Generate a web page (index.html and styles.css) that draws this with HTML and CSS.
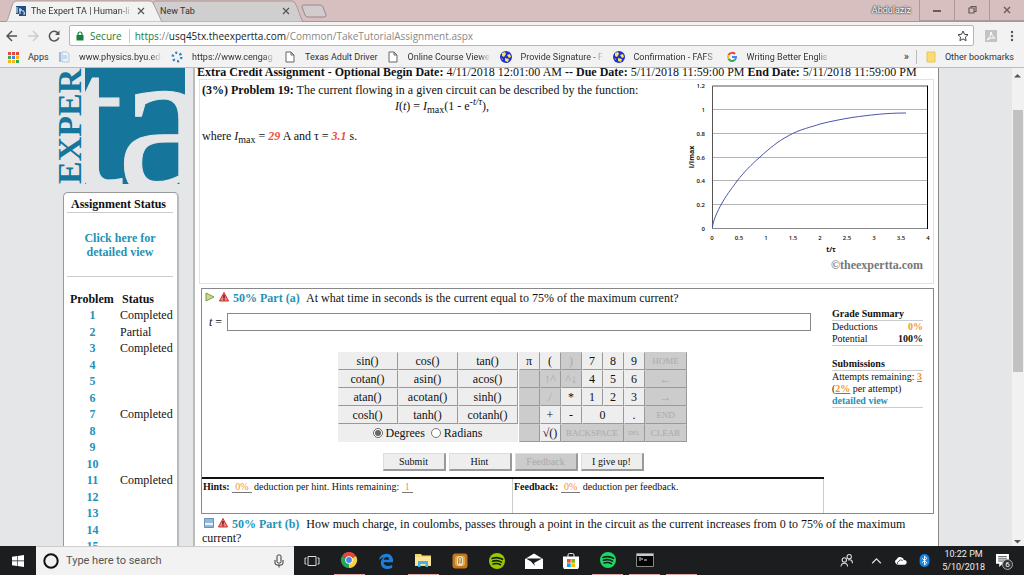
FILE: index.html
```html
<!DOCTYPE html>
<html lang="en">
<head>
<meta charset="utf-8">
<title>The Expert TA | Human-like Grading</title>
<link rel="stylesheet" href="styles.css">
</head>
<body>
<header class="browser">
  <div class="tabstrip">
    <div class="tab tab-active">
      <svg class="tab-shape" viewBox="0 0 158 22" preserveAspectRatio="none"><path d="M0 22C4 22 4 18 8 6Q9 1 13 1H146Q149 1 150 5L158 22Z" fill="#f2f2f2" stroke="#a08c8c" stroke-width=".8"/></svg>
      <svg class="ico" viewBox="0 0 12 12"><path d="M1 1h10v10H4V9H1z" fill="#1f4f86"/><path d="M5 3v6M4 5h3M7 6q3-1 2 4M1 3h2M1 5h2M1 7h2" stroke="#fff" fill="none"/></svg>
      <span class="tab-title fade">The Expert TA | Human-li</span>
      <button class="close" aria-label="Close tab"><svg viewBox="0 0 8 8"><path d="M1 1l6 6M7 1L1 7" stroke="#555" stroke-width="1.2"/></svg></button>
    </div>
    <div class="tab tab-idle">
      <svg class="tab-shape" viewBox="0 0 152 22" preserveAspectRatio="none"><path d="M8 22L2 7Q0 1 4 1H140Q143 1 145 7L149 18Q150 22 152 22Z" fill="#d0cecf" stroke="#a08c8c" stroke-width=".8"/></svg>
      <span class="tab-title">New Tab</span>
      <button class="close" aria-label="Close tab"><svg viewBox="0 0 8 8"><path d="M1 1l6 6M7 1L1 7" stroke="#555" stroke-width="1.2"/></svg></button>
    </div>
    <button class="newtab" aria-label="New tab"><svg viewBox="0 0 26 14"><path d="M2 1H19Q21 1 22 3L25 11Q25 13 23 13H7Q5 13 4 11L1 3Q1 1 2 1Z" fill="#d1cdce" stroke="#9a8888"/></svg></button>
    <div class="window-tools">
      <span class="user">Abdulaziz</span>
      <button aria-label="Minimize"><svg viewBox="0 0 10 10"><path d="M1 6h8" stroke="#665c5c" stroke-width="2"/></svg></button>
      <button aria-label="Restore"><svg viewBox="0 0 10 10"><path d="M2 3h5v5H2zM4 3V1.500h5v5H7" fill="none" stroke="#665c5c" stroke-width="1.200"/></svg></button>
      <button aria-label="Close"><svg viewBox="0 0 10 10"><path d="M2 2l6 6M8 2L2 8" stroke="#665c5c" stroke-width="1.400"/></svg></button>
    </div>
  </div>
  <div class="toolbar">
    <button aria-label="Back"><svg viewBox="0 0 12 12"><path d="M11 6H1M6 1L1 6l5 5" fill="none" stroke="#555" stroke-width="1.500"/></svg></button>
    <button aria-label="Forward"><svg viewBox="0 0 12 12"><path d="M1 6h10M6 1l5 5-5 5" fill="none" stroke="#ccc" stroke-width="1.500"/></svg></button>
    <button aria-label="Reload"><svg viewBox="0 0 12 12"><path d="M10 3.200A4.800 4.800 0 1 0 10.800 7.500" fill="none" stroke="#555" stroke-width="1.500"/><path d="M11.500 .5v4.500H7z" fill="#555"/></svg></button>
    <div class="omnibox">
      <svg class="lock" viewBox="0 0 8 10"><path d="M2 5V3a2 2 0 0 1 4 0v2" fill="none" stroke="#0b8043" stroke-width="1.200"/><path d="M.5 4h7v5.500h-7z" fill="#188038"/></svg>
      <span class="secure">Secure</span>
      <div class="url" role="textbox" aria-label="Address"><span class="green">https</span>://<span class="host">usq45tx.theexpertta.com</span>/Common/TakeTutorialAssignment.aspx</div>
      <button aria-label="Bookmark page"><svg viewBox="0 0 12 12"><path d="M6 1l1.500 3.300 3.500.4-2.600 2.400.7 3.600L6 8.900l-3.100 1.800.7-3.600L1 4.700l3.500-.4z" fill="none" stroke="#444"/></svg></button>
    </div>
    <button class="ext" aria-label="Acrobat extension"><svg viewBox="0 0 12 12"><path d="M0 0h12v12H0z" fill="#c3c3c3"/><path d="M2 10q4-3 4-8 1 5 4 6-4-1-8 2" fill="none" stroke="#fff"/></svg></button>
    <button class="menu" aria-label="Menu"><svg viewBox="0 0 12 12"><circle cx="6" cy="2" r="1.200" fill="#555"/><circle cx="6" cy="6" r="1.200" fill="#555"/><circle cx="6" cy="10" r="1.200" fill="#555"/></svg></button>
  </div>
  <nav class="bookmarks">
    <a class="apps" href="#"><svg viewBox="0 0 11 11"><path d="M0 0h3v3H0zM4 0h3v3H4zM8 0h3v3H8z" fill="#e5473b"/><path d="M0 4h3v3H0zM8 8h3v3H8z" fill="#38a852"/><path d="M4 4h3v3H4z" fill="#4382ee"/><path d="M8 4h3v3H8zM0 8h3v3H0zM4 8h3v3H4z" fill="#f5b916"/></svg>Apps</a>
    <a class="mark" href="#"><svg viewBox="0 0 12 12"><path d="M1 1h2v10H1z" fill="#9cc0dd"/><path d="M4 1h5l2 2v8H4z" fill="#eef3f8" stroke="#b9c7d6"/><path d="M5 5h4M5 7h4" stroke="#9cc0dd"/></svg><span class="fade">www.physics.byu.edu</span></a>
    <a class="mark" href="#"><svg viewBox="0 0 12 12"><circle cx="6" cy="6" r="4.300" fill="none" stroke="#2c86b8" stroke-width="2.500" stroke-dasharray="2 2.500"/></svg><span class="fade">https://www.cengag</span></a>
    <a class="mark" href="#"><svg viewBox="0 0 12 12"><path d="M2 1h5l3 3v7H2zM7 1v3h3" fill="#fff" stroke="#666"/></svg><span>Texas Adult Driver</span></a>
    <a class="mark" href="#"><svg viewBox="0 0 12 12"><path d="M2 1h5l3 3v7H2zM7 1v3h3" fill="#fff" stroke="#666"/></svg><span class="fade">Online Course Viewe</span></a>
    <a class="mark" href="#"><svg viewBox="0 0 12 12"><circle cx="6" cy="6" r="6" fill="#1a2fd8"/><path d="M2 2l3-1 1 2-2 3-2-1zM7 4l3-1 1 3-2 1zM5 7l4 1-1 3-3-1zM1 7l2 1v1z" fill="#ffe34d"/></svg><span class="fade">Provide Signature - F</span></a>
    <a class="mark" href="#"><svg viewBox="0 0 12 12"><circle cx="6" cy="6" r="6" fill="#1a2fd8"/><path d="M2 2l3-1 1 2-2 3-2-1zM7 4l3-1 1 3-2 1zM5 7l4 1-1 3-3-1zM1 7l2 1v1z" fill="#ffe34d"/></svg><span class="fade">Confirmation - FAFS</span></a>
    <a class="mark" href="#"><svg viewBox="0 0 12 12"><g fill="none" stroke-width="2"><path d="M9 3A4 4 0 0 0 2.500 4.200" stroke="#ea4335"/><path d="M2.500 4.200a4 4 0 0 0 0 3.600" stroke="#fbbc05"/><path d="M2.500 7.800A4 4 0 0 0 8.700 9" stroke="#34a853"/><path d="M8.700 9A4 4 0 0 0 10 6H6" stroke="#4285f4"/></g></svg><span class="fade">Writing Better Englis</span></a>
    <span class="more">»</span>
    <a class="other" href="#"><svg viewBox="0 0 10 12"><path d="M1 1h8v10H1z" fill="#fbdc74" stroke="#e8c658"/></svg>Other bookmarks</a>
  </nav>
</header>

<div class="viewport">
  <aside class="sidebar">
    <svg class="logo" viewBox="0 0 128 122" role="img" aria-label="Expert TA">
      <defs><clipPath id="tile"><path d="M28 0h100v119H28z"/></clipPath></defs>
      <path d="M28 0h100v119H28z" fill="#15759a"/>
      <g clip-path="url(#tile)"><text class="logo-t" x="12" y="123">t</text><text class="logo-a" x="60" y="126">a</text></g>
      <text class="logo-expert" transform="translate(24 119) rotate(-90)">EXPER</text>
    </svg>
    <section class="status">
      <h2>Assignment Status</h2>
      <a class="detail" href="#">Click here for detailed view</a>
      <table>
        <thead><tr><th>Problem</th><th>Status</th></tr></thead>
        <tbody>
          <tr><td>1</td><td>Completed</td></tr><tr><td>2</td><td>Partial</td></tr><tr><td>3</td><td>Completed</td></tr>
          <tr><td>4</td><td></td></tr><tr><td>5</td><td></td></tr><tr><td>6</td><td></td></tr>
          <tr><td>7</td><td>Completed</td></tr><tr><td>8</td><td></td></tr><tr><td>9</td><td></td></tr>
          <tr><td>10</td><td></td></tr><tr><td>11</td><td>Completed</td></tr><tr><td>12</td><td></td></tr>
          <tr><td>13</td><td></td></tr><tr><td>14</td><td></td></tr><tr><td>15</td><td></td></tr>
        </tbody>
      </table>
    </section>
  </aside>

  <main class="main">
    <p class="dates"><b>Extra Credit Assignment - Optional Begin Date:</b> 4/11/2018 12:01:00 AM <b>-- Due Date:</b> 5/11/2018 11:59:00 PM <b>End Date:</b> 5/11/2018 11:59:00 PM</p>
    <section class="problem">
      <div class="statement">
        <p><b>(3%) Problem 19:</b> The current flowing in a given circuit can be described by the function:</p>
        <p class="formula"><i>I</i>(<i>t</i>) = <i>I</i><sub>max</sub>(1 - e<sup>-<i>t/τ</i></sup>),</p>
        <p class="given">where <i>I</i><sub>max</sub> = <em>29</em> A and τ = <em>3.1</em> s.</p>
      </div>
      <div class="figure">
        <svg viewBox="0 0 250 176" role="img" aria-label="I over Imax against t over tau">
          <path d="M30 27.500H245M30 51.500H245M30 75.500H245M30 98.500H245M30 122.500H245" stroke="#b3b3b3" stroke-width="1.200"/>
          <path d="M30.500 4H245M30.500 4V146.500" fill="none" stroke="#555"/><path d="M30 146.500H245.500" stroke="#888"/><path d="M245.500 3.500V147" stroke="#000"/>
          <path d="M30.500 145C31 139 35 130 40 121C47 109 51 105 55 99C63 89 69 83 78 75C88 66 95 60 106 54C118 47 130 45 138 42C150 39 161 37 170 35.500C188 33 204 31 224 31" fill="none" stroke="#4a56a8"/>
          <g text-anchor="end"><text x="23" y="6">1.2</text><text x="23" y="30">1</text><text x="23" y="54">0.8</text><text x="23" y="78">0.6</text><text x="23" y="101">0.4</text><text x="23" y="125">0.2</text><text x="23" y="149">0</text></g>
          <g text-anchor="middle"><text x="30" y="158">0</text><text x="57" y="158">0.5</text><text x="84" y="158">1</text><text x="111" y="158">1.5</text><text x="138" y="158">2</text><text x="165" y="158">2.5</text><text x="192" y="158">3</text><text x="219" y="158">3.5</text><text x="246" y="158">4</text><text class="axis" x="149" y="170">t/τ</text><text class="axis" transform="translate(12 75) rotate(-90)">I/Imax</text></g>
        </svg>
        <p class="credit">©theexpertta.com</p>
      </div>
    </section>

    <section class="part">
      <p class="question"><svg class="mini" viewBox="0 0 10 10"><path d="M1 1l8 4-8 4z" fill="#c3df7d" stroke="#7f9a4d"/></svg><svg class="warn" viewBox="0 0 10 10"><path d="M5 .5L9.600 9H.4z" fill="#f08080" stroke="#c33"/><path d="M5 3v3.500M5 7.300v1" stroke="#400" stroke-width="1.200"/></svg><b class="teal">50% Part (a)</b> At what time in seconds is the current equal to 75% of the maximum current?</p>
      <div class="work">
        <div class="entry">
          <div class="answer"><label for="ans"><i>t</i> =</label><input id="ans" type="text"></div>
          <div class="keys">
            <div class="funcs">
              <button>sin()</button><button>cos()</button><button>tan()</button>
              <button>cotan()</button><button>asin()</button><button>acos()</button>
              <button>atan()</button><button>acotan()</button><button>sinh()</button>
              <button>cosh()</button><button>tanh()</button><button>cotanh()</button>
              <div class="units"><label><input type="radio" name="u" checked>Degrees</label><label><input type="radio" name="u">Radians</label></div>
            </div>
            <div class="pad">
              <button>π</button><button>(</button><button disabled>)</button><button>7</button><button>8</button><button>9</button><button class="small" disabled>HOME</button>
              <button disabled aria-label="blank"></button><button disabled>↑^</button><button disabled>^↓</button><button>4</button><button>5</button><button>6</button><button disabled>←</button>
              <button disabled aria-label="blank"></button><button disabled>/</button><button>*</button><button>1</button><button>2</button><button>3</button><button disabled>→</button>
              <button disabled aria-label="blank"></button><button>+</button><button>-</button><button class="two">0</button><button>.</button><button class="small" disabled>END</button>
              <button disabled aria-label="blank"></button><button>√()</button><button class="three small" disabled>BACKSPACE</button><button class="tiny" disabled>DEL</button><button class="small" disabled>CLEAR</button>
            </div>
          </div>
          <div class="actions"><button>Submit</button><button>Hint</button><button disabled>Feedback</button><button>I give up!</button></div>
          <div class="notes">
            <p><b>Hints:</b> <span class="blank">0%</span> deduction per hint. Hints remaining: <span class="blank">1</span></p>
            <p><b>Feedback:</b> <span class="blank">0%</span> deduction per feedback.</p>
          </div>
        </div>
        <aside class="grades">
          <h3>Grade Summary</h3>
          <dl><dt>Deductions</dt><dd class="orange">0%</dd><dt>Potential</dt><dd>100%</dd></dl>
          <h3>Submissions</h3>
          <div class="tries">Attempts remaining: <span class="left">3</span><br>(<span class="left">2%</span> per attempt)<br><a href="#">detailed view</a></div>
        </aside>
      </div>
    </section>
    <p class="question next"><svg class="mini" viewBox="0 0 10 10"><path d="M.5.5h9v9h-9z" fill="#8fbbe3" stroke="#6e8fb5"/><path d="M1 6h8" stroke="#e8f2fb" stroke-width="2"/></svg><svg class="warn" viewBox="0 0 10 10"><path d="M5 .5L9.600 9H.4z" fill="#f08080" stroke="#c33"/><path d="M5 3v3.500M5 7.300v1" stroke="#400" stroke-width="1.200"/></svg><b class="teal">50% Part (b)</b> How much charge, in coulombs, passes through a point in the circuit as the current increases from 0 to 75% of the maximum current?</p>
  </main>
  <div class="scroll"><svg viewBox="0 0 11 8"><path d="M2 5.500h7L5.500 2z" fill="#555"/></svg><div class="thumb"></div><svg viewBox="0 0 11 8"><path d="M2 2h7L5.500 5.500z" fill="#555"/></svg></div>
</div>

<footer class="taskbar">
  <button class="start" aria-label="Start"><svg viewBox="0 0 12 12"><path d="M0 1.800l5-.8v4.600H0zM5.600.9L12 0v5.600H5.600zM0 6.300h5V11l-5-.8zM5.600 6.300H12V12l-6.400-.9z" fill="#fff"/></svg></button>
  <div class="search">
    <svg class="ring" viewBox="0 0 16 16"><circle cx="8" cy="8" r="6.700" fill="none" stroke="#111" stroke-width="2"/></svg>
    <input type="text" placeholder="Type here to search" aria-label="Search">
    <svg class="mic" viewBox="0 0 10 14"><rect x="3" y="1" width="4" height="8" rx="1.500" fill="none" stroke="#333"/><path d="M1 6v3q0 2 2 2h4q2 0 2-2V6M5 11v2.500" fill="none" stroke="#333"/></svg>
  </div>
  <div class="apps-row">
    <button aria-label="Task view"><svg viewBox="0 0 16 16"><path d="M4 3.500h8v9H4zM2.500 5H1v6h1.500M13.500 5H15v6h-1.500" fill="none" stroke="#ddd"/></svg></button>
    <button class="open" aria-label="Chrome"><svg viewBox="0 0 16 16"><path d="M8 8L1 4A8 8 0 0 1 15 4z" fill="#de4b3b"/><path d="M8 8L15 4A8 8 0 0 1 8 16z" fill="#fbd03b"/><path d="M8 8L8 16A8 8 0 0 1 1 4z" fill="#27a557"/><circle cx="8" cy="8" r="3.800" fill="#fff"/><circle cx="8" cy="8" r="2.900" fill="#4587f0"/></svg></button>
    <button aria-label="Edge"><svg viewBox="0 0 16 16"><path d="M1 7Q2 1 8.500 .8Q15.500 1 15 9.200H5.600Q6 13 10 13q2.500 0 4.200-1.200v3Q12 16 9 16Q2.700 15.500 2.800 9.500Q3 6 6.500 4.500Q3 4.700 1 7zM5.800 6.700h5.400Q11 4 8.600 4T5.800 6.700z" fill="#1b7fdb"/></svg></button>
    <button class="open" aria-label="File Explorer"><svg viewBox="0 0 16 16"><path d="M0 2h6l1 1.500h9V14H0z" fill="#f7d774"/><path d="M0 5h16v8H0z" fill="#fde698"/><path d="M3 15V9h10v6h-2.500v-3h-5v3z" fill="#44b4e4"/></svg></button>
    <button aria-label="Stamp"><svg viewBox="0 0 16 16"><rect x=".5" y=".5" width="15" height="15" rx="3" fill="#c5781b"/><rect x="3" y="3" width="10" height="10" rx="2" fill="#dfa652"/><rect x="5" y="3" width="6" height="10" rx="3" fill="#f3e2b8"/><path d="M6.500 11V6q0-1.500 1.500-1.500T9.500 6v4H8V6.500" fill="none" stroke="#9d7630" stroke-width=".8"/></svg></button>
    <button aria-label="Music"><svg viewBox="0 0 16 16"><circle cx="8" cy="8" r="8" fill="#9bc800"/><path d="M3 5.500q5.500-2 10.500.8M3.500 8.300q4.500-1.600 9 .8M4 11q4-1.300 7.500.7" fill="none" stroke="#16210b" stroke-width="1.600" stroke-linecap="round"/></svg></button>
    <button aria-label="Mail"><svg viewBox="0 0 18 16"><path d="M0 6l9-5.500L18 6v10H0z" fill="#fff"/><path d="M1 5.500h16L9 10l1 3-4-4.500z" fill="#1b1d1e"/></svg></button>
    <button aria-label="Store"><svg viewBox="0 0 16 16"><path d="M5 4V2q0-1.500 1.500-1.500h3Q11 .5 11 2v2" fill="none" stroke="#eee"/><path d="M0 3.500h16V14l-1 2H1l-1-2z" fill="#fff"/><path d="M4 6h3.700v3.700H4z" fill="#f25022"/><path d="M8.300 6H12v3.700H8.300z" fill="#7fba00"/><path d="M4 10.300h3.700V14H4z" fill="#00a4ef"/><path d="M8.300 10.300H12V14H8.300z" fill="#ffb900"/></svg></button>
    <button class="open" aria-label="Spotify"><svg viewBox="0 0 16 16"><circle cx="8" cy="8" r="8" fill="#1fd565"/><path d="M3 5.500q5.500-2 10.500.8M3.500 8.300q4.500-1.600 9 .8M4 11q4-1.300 7.500.7" fill="none" stroke="#12251a" stroke-width="1.600" stroke-linecap="round"/></svg></button>
    <button class="open" aria-label="Command Prompt"><svg viewBox="0 0 18 16"><path d="M.5 1.500h17v13H.5z" fill="#050505" stroke="#888"/><path d="M1 2h16v2H1z" fill="#ccc"/><path d="M3 6h2M3 8h2M6 6v2M8 8h3" stroke="#ddd"/></svg></button>
    <button class="open" aria-label="Window"></button>
  </div>
  <div class="tray">
    <svg viewBox="0 0 12 12"><g fill="none" stroke="#ddd"><circle cx="4" cy="5.500" r="2"/><path d="M1 11.500q0-3 3-3t3 3"/><circle cx="8.500" cy="2.500" r="2"/><path d="M7.500 5.500q4-1 4 3"/></g></svg>
    <svg class="chevron" viewBox="0 0 12 12"><path d="M2 8.500l4-4 4 4" fill="none" stroke="#ddd" stroke-width="1.200"/></svg>
    <svg viewBox="0 0 12 12"><path d="M2 9a2.300 2.300 0 0 1 .3-4Q3.500 1.800 6.500 3 9 3.500 9 5.500q2.700 0 2.700 2T10 10H3z" fill="#fff"/><path d="M3.500 9.500q-1-2 1-3Q6 4.500 8 6" fill="none" stroke="#1b1d1e" stroke-width=".7"/></svg>
    <svg viewBox="0 0 12 12"><rect x="1.500" width="9" height="12" rx="4.500" fill="#1486e8"/><path d="M3.800 4l4.400 4L6 10V2l2.200 2-4.400 4" fill="none" stroke="#fff" stroke-width=".9"/></svg>
    <div class="clock"><span>10:22 PM</span><span>5/10/2018</span></div>
    <button class="notice" aria-label="6 notifications"><svg viewBox="0 0 12 12"><path d="M0 0h12v9H6l-3 3V9H0z" fill="#fff"/><path d="M2 2.500h8M2 4.500h8M2 6.500h8" stroke="#333" stroke-width=".8"/></svg><span class="count">6</span></button>
  </div>
</footer>
</body>
</html>
```

FILE: styles.css
```css
* { box-sizing: border-box; }
body { margin: 0; height: 100vh; overflow: hidden; display: flex; flex-direction: column; font: 12px/14px "Liberation Serif", serif; color: #111; }
p, h2, h3, dl, dd { margin: 0; }
button { border: 0; padding: 0; background: none; font: inherit; color: inherit; }
a { color: inherit; text-decoration: none; }
svg { display: block; flex: none; }

.browser { flex: none; font: 9px/14px Roboto, sans-serif; color: #333; background: #f2f2f2; }
.tabstrip { display: flex; height: 22px; padding-left: 4px; background: #d6bfbe; border-bottom: 1px solid #a99797; }
.tab { position: relative; display: flex; align-items: center; height: 22px; }
.tab-active { width: 158px; padding: 0 17px 0 11px; gap: 4px; z-index: 1; }
.tab-idle { width: 152px; margin-left: -10px; padding: 0 14px 0 8px; }
.tab-shape { inset: 0; width: 100%; height: 22px; }
.tab > * { position: relative; }
.tab > .tab-shape { position: absolute; }
.ico { width: 12px; height: 12px; }
.tab-title { flex: 1; white-space: nowrap; overflow: hidden; }
.fade { -webkit-mask-image: linear-gradient(to right, #000 86%, transparent); mask-image: linear-gradient(to right, #000 86%, transparent); }
.close svg { width: 8px; height: 8px; }
.newtab { margin-left: -3px; }
.newtab svg { width: 26px; height: 14px; }
.window-tools { margin-left: auto; display: flex; }
.window-tools button { width: 35px; height: 21px; display: grid; place-items: center; border-left: 1px solid #ac9999; border-bottom: 1px solid #ac9999; }
.window-tools svg { width: 10px; height: 10px; }
.user { padding: 3px 8px 0 0; color: #fff; text-shadow: 0 0 2px #222, 0 0 2px #222; }
.toolbar { display: flex; align-items: center; height: 25px; padding: 2px 6px 0; gap: 9px; }
.toolbar svg { width: 12px; height: 12px; }
.omnibox { flex: 1; display: flex; align-items: center; height: 21px; margin-right: 2px; padding: 0 4px 0 6px; background: #fff; border: 1px solid #b5b5b5; border-radius: 2px; font: 10px/14px "Open Sans", sans-serif; color: #888; }
.omnibox .lock { width: 8px; height: 10px; }
.secure { margin-left: 6px; padding-right: 7px; border-right: 1px solid #ccc; color: #188038; }
.url { flex: 1; margin-left: 5px; white-space: nowrap; }
.green { color: #188038; }
.host { color: #222; }
.bookmarks { display: flex; align-items: center; height: 21px; padding: 0 10px 0 8px; border-bottom: 1px solid #bbb; white-space: nowrap; }
.bookmarks a { display: flex; align-items: center; }
.bookmarks svg { width: 12px; height: 12px; }
.bookmarks .apps { width: 50px; gap: 9px; }
.bookmarks .apps svg { width: 11px; height: 11px; }
.mark { gap: 9px; margin-right: 9px; }
.mark .fade { width: 83px; overflow: hidden; }
.more { margin-left: auto; padding-right: 7px; font-size: 11px; }
.other { gap: 8px; padding-left: 8px; border-left: 1px solid #bbb; }

.viewport { flex: 1; min-height: 0; display: flex; overflow: hidden; background: #e5e6e8; }
.sidebar { flex: none; width: 193px; padding-left: 57px; margin-top: -3px; }
.logo { width: 128px; height: 122px; }
.logo-t, .logo-a { font: 195px "Liberation Serif", serif; fill: #e5e6e8; stroke: #e5e6e8; stroke-width: 1px; }
.logo-a { font-size: 212px; }
.logo-expert { font: bold 34px "Liberation Serif", serif; fill: #15759a; }
.status { width: 116px; margin: 5px 0 0 6px; padding: 4px 4px 0 3px; background: #fff; border: 1px solid #999; border-right: 2px solid #bbb; border-radius: 5px; }
.status h2 { padding: 0 0 1px 4px; font-size: 12px; line-height: 14px; border-bottom: 1px solid #ccc; }
.detail { display: block; padding: 18px 16px 17px; border-bottom: 1px solid #ccc; font-weight: bold; text-align: center; color: #2492b8; }
.status table { width: 100%; margin-top: 14px; border-collapse: collapse; }
.status th, .status td { padding: 0; height: 16px; line-height: 16px; text-align: left; }
.status tr:nth-child(even) td { height: 17px; }
.status th:first-child { width: 53px; padding-left: 3px; }
.status th + th { padding-left: 2px; }
.status td:first-child { padding-right: 2px; text-align: center; font-weight: bold; color: #2492b8; }

.main { flex: 1; min-width: 0; margin: -3px 73px 0 0; padding: 0 4px 0 2px; background: #fff; border-left: 2px solid #bbb; border-right: 1px solid #888; }
.dates { white-space: nowrap; line-height: 14px; }
.problem { display: flex; margin-left: 2px; height: 205px; padding: 2px 1px 0 2px; border: 1px solid #e2e2e2; }
.statement { flex: 1; line-height: 16px; }
.statement sub, .statement sup { font-size: 10px; line-height: 0; }
.statement em { font-weight: bold; color: #f4503c; }
.formula { text-align: center; }
.given { margin-top: 14px; }
.figure { flex: none; width: 250px; }
.figure svg { width: 250px; height: 176px; font: 600 6px "Open Sans", sans-serif; fill: #111; }
.axis { font-size: 7px; font-weight: 700; }
.credit { padding-right: 9px; font-weight: bold; text-align: right; color: #777; }
.part { margin: 4px 0 0 4px; border: 1px solid #888; }
.question { line-height: 14px; padding: 2px 0 0 3px; }
.question svg { display: inline-block; width: 10px; height: 10px; margin-right: 4px; }
.next { padding: 3px 0 0 5px; text-indent: 2px; }
.teal { margin-right: 4px; color: #2492b8; }
.work { display: flex; }
.entry { flex: 1; min-width: 0; }
.answer { display: flex; align-items: center; gap: 5px; padding: 8px 13px 0 7px; }
.answer input { flex: 1; height: 18px; border: 1px solid #888; font: inherit; }
.keys { display: flex; justify-content: center; gap: 1px; margin-top: 21px; padding-right: 2px; }
.keys button { height: 18px; background: #eee; border: 1px solid #eee; border-right-color: #999; border-bottom-color: #999; line-height: 14px; }
.keys button:disabled { background: #ccc; border-color: #ccc #999 #999 #ccc; color: #aaa; }
.funcs { display: grid; grid-template-columns: repeat(3, 60px); }
.units { grid-column: span 3; display: flex; justify-content: center; gap: 6px; height: 18px; background: #eee; }
.units label { display: flex; align-items: center; gap: 3px; }
.units input { width: 10px; height: 10px; margin: 0; accent-color: #666; }
.pad { display: grid; grid-template-columns: repeat(6, 21px) 42px; }
.pad .two { grid-column: span 2; }
.pad .three { grid-column: span 3; }
.pad .small { font-size: 9px; }
.pad .tiny { font-size: 6px; }
.actions { display: flex; justify-content: center; gap: 3px; padding: 11px 0 6px; }
.actions button { width: 63px; height: 18px; background: #eee; border: 1px solid #ddd; border-right: 2px solid #999; border-bottom: 2px solid #999; font-size: 10px; line-height: 14px; }
.actions button:disabled { background: #ccc; color: #aaa; }
.notes { display: flex; border-top: 2px solid #111; font-size: 10px; }
.notes p { flex: 1; height: 34px; padding: 1px 1px 0; border-right: 1px solid #ccc; }
.blank { display: inline-block; padding: 0 3px; line-height: 11px; border-bottom: 1px solid #777; color: #f7941d; }
.grades { flex: none; width: 91px; margin: 2px 10px 0 8px; font-size: 10px; line-height: 12px; }
.grades h3 { font-size: 10px; line-height: 13px; border-bottom: 1px solid #ccc; }
.grades dl { display: grid; grid-template-columns: 1fr auto; margin-bottom: 11px; border-bottom: 1px solid #ccc; }
.grades dd { font-weight: bold; text-align: right; }
.grades .orange { color: #f7941d; }
.left { font-weight: bold; color: #f7941d; text-decoration: underline #777; }
.tries { border-bottom: 1px solid #ccc; white-space: nowrap; }
.tries a { font-weight: bold; color: #2492b8; }
.scroll { flex: none; width: 12px; display: flex; flex-direction: column; padding-top: 4px; background: #f1f1f1; }
.scroll svg { width: 11px; height: 8px; }
.thumb { height: 262px; margin: 30px 1px auto; background: #c1c1c1; }

.taskbar { flex: none; display: flex; height: 29px; background: #1b1d1e; font: 11px/14px Roboto, sans-serif; color: #eee; }
.start { width: 36px; display: grid; place-items: center; }
.start svg { width: 12px; height: 12px; }
.search { width: 258px; display: flex; align-items: center; gap: 7px; padding: 0 10px 0 7px; background: #f2f2f2; border-top: 1px solid #ccc; }
.search input { flex: 1; min-width: 0; padding: 0; border: 0; background: none; font: inherit; }
.search input::placeholder { color: #555; opacity: 1; }
.ring { width: 16px; height: 16px; }
.mic { width: 10px; height: 14px; }
.apps-row { width: 406px; display: grid; grid-template-columns: repeat(11, 1fr); }
.apps-row button { display: grid; place-items: center; }
.apps-row svg { width: 18px; height: 16px; }
.apps-row .open { margin: 0 3px; border-bottom: 1px solid #e0a9a9; }
.tray { margin-left: auto; display: flex; align-items: center; gap: 11px; padding-right: 15px; }
.tray svg { width: 13px; height: 13px; }
.tray .chevron { margin-left: 6px; }
.clock { display: flex; flex-direction: column; font-size: 9px; line-height: 13px; text-align: center; }
.notice { position: relative; }
.count { position: absolute; left: 6px; top: 5px; width: 11px; height: 11px; border-radius: 50%; border: 1px solid #aaa; background: #333; color: #fff; font-size: 8px; line-height: 9px; }
```
